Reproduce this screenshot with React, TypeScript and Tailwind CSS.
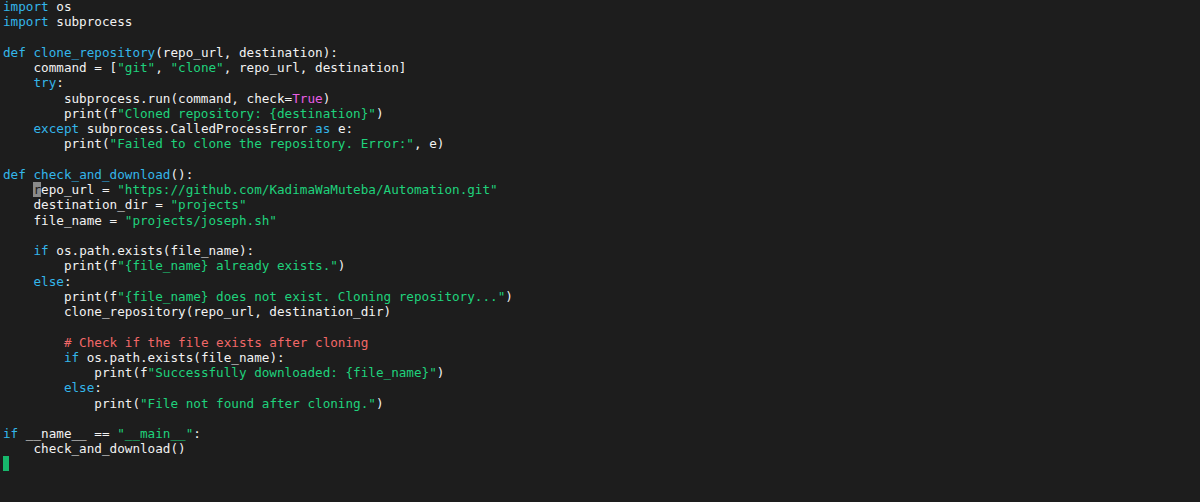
import React from "react";

type Tok = [string, string];
const W = "text-[#f2f2f2]";
const K = "text-[#34b6ea]";
const S = "text-[#1fd27c]";
const M = "text-[#e85ee4]";
const C = "text-[#f26868]";

const lines: Tok[][] = [
  [[K, "import"], [W, " os"]],
  [[K, "import"], [W, " subprocess"]],
  [],
  [[K, "def"], [W, " "], [K, "clone_repository"], [W, "(repo_url, destination):"]],
  [[W, "    command = ["], [S, '"git"'], [W, ", "], [S, '"clone"'], [W, ", repo_url, destination]"]],
  [[W, "    "], [K, "try"], [W, ":"]],
  [[W, "        subprocess.run(command, check="], [M, "True"], [W, ")"]],
  [[W, "        print(f"], [S, '"Cloned repository: {destination}"'], [W, ")"]],
  [[W, "    "], [K, "except"], [W, " subprocess.CalledProcessError "], [K, "as"], [W, " e:"]],
  [[W, "        print("], [S, '"Failed to clone the repository. Error:"'], [W, ", e)"]],
  [],
  [[K, "def"], [W, " "], [K, "check_and_download"], [W, "():"]],
  [[W, "    "], ["cursor", "r"], [W, "epo_url = "], [S, '"https://github.com/KadimaWaMuteba/Automation.git"']],
  [[W, "    destination_dir = "], [S, '"projects"']],
  [[W, "    file_name = "], [S, '"projects/joseph.sh"']],
  [],
  [[W, "    "], [K, "if"], [W, " os.path.exists(file_name):"]],
  [[W, "        print(f"], [S, '"{file_name} already exists."'], [W, ")"]],
  [[W, "    "], [K, "else"], [W, ":"]],
  [[W, "        print(f"], [S, '"{file_name} does not exist. Cloning repository..."'], [W, ")"]],
  [[W, "        clone_repository(repo_url, destination_dir)"]],
  [],
  [[W, "        "], [C, "# Check if the file exists after cloning"]],
  [[W, "        "], [K, "if"], [W, " os.path.exists(file_name):"]],
  [[W, "            print(f"], [S, '"Successfully downloaded: {file_name}"'], [W, ")"]],
  [[W, "        "], [K, "else"], [W, ":"]],
  [[W, "            print("], [S, '"File not found after cloning."'], [W, ")"]],
  [],
  [[K, "if"], [W, " __name__ == "], [S, '"__main__"'], [W, ":"]],
  [[W, "    check_and_download()"]],
  [["block", " "]],
];

export default function App() {
  return (
    <div
      className="w-[1200px] h-[502px] overflow-hidden bg-[#1d1d1d] pl-[3px]"
      style={{ fontFamily: '"DejaVu Sans Mono", monospace' }}
    >
      <pre
        className="m-0 text-[12.65px] leading-[15.25px] text-[#f2f2f2] -mt-[1px]"
        style={{ fontFamily: '"DejaVu Sans Mono", monospace' }}
      >
        {lines.map((ln, i) => (
          <div key={i} className="h-[15.25px] whitespace-pre">
            {ln.length === 0
              ? " "
              : ln.map(([cls, t], j) =>
                  cls === "cursor" ? (
                    <span key={j} className="bg-[#8a8a8a] text-[#1d1d1d]">{t}</span>
                  ) : cls === "block" ? (
                    <span key={j} className="inline-block w-[6px] h-[15px] bg-[#17b86c] align-top -mt-[1px]"></span>
                  ) : (
                    <span key={j} className={cls}>{t}</span>
                  )
                )}
          </div>
        ))}
      </pre>
    </div>
  );
}
